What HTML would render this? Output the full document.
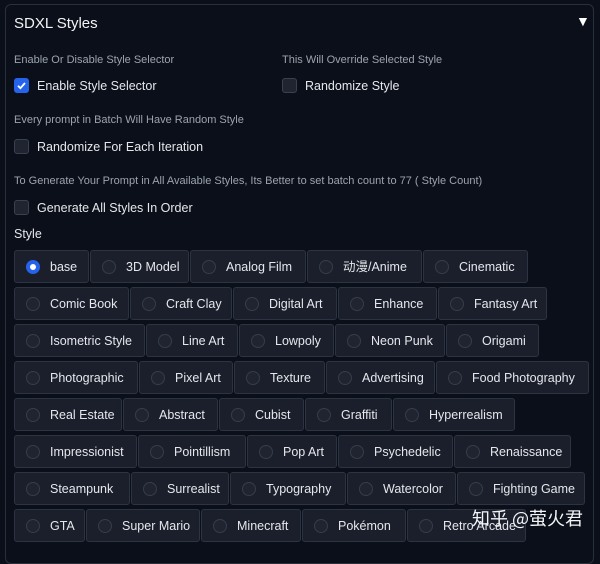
<!DOCTYPE html><html><head><meta charset="utf-8"><style>
*{margin:0;padding:0;box-sizing:border-box}
body{width:600px;height:544px;background:#0b0f19;font-family:"Liberation Sans","Noto Sans CJK SC",sans-serif;color:#e5e7eb;position:relative;overflow:hidden}
.panel{position:absolute;left:5px;top:4px;width:589px;height:560px;border:1px solid #2a303b;border-radius:6px;background:#0b0f19}
.t{position:absolute;white-space:nowrap}
.lab{font-size:11px;color:#9ca3af}
.cb{position:absolute;width:15px;height:15px;border-radius:3px;background:#1f2430;border:1px solid #374151}
.c{position:absolute;height:33px;background:#1a1f2b;border:1px solid #2c3442;border-radius:3px;font-size:12.5px;color:#e5e7eb;line-height:32px;white-space:nowrap}
.c i{position:absolute;left:11px;top:9px;width:14px;height:14px;border-radius:50%;background:#1f2430;border:1px solid #353d4a}
.c span{position:absolute;left:35px}
</style></head><body>
<div class="panel"></div>
<div class="t" style="left:14px;top:15px;font-size:15px;color:#f3f4f6">SDXL Styles</div>
<div class="t" style="left:576px;top:13px;font-size:14px;color:#fff">▼</div>
<div class="t lab" style="left:14px;top:54px">Enable Or Disable Style Selector</div>
<div class="t lab" style="left:282px;top:54px">This Will Override Selected Style</div>
<div class="cb" style="left:14px;top:78px;background:#2563eb;border-color:#2563eb"><svg width="13" height="13" viewBox="0 0 13 13" style="position:absolute;left:0;top:0"><path d="M3 6.8L5.4 9.2L10 4" stroke="#fff" stroke-width="1.8" fill="none"/></svg></div>
<div class="t" style="left:37px;top:79px;font-size:12.5px">Enable Style Selector</div>
<div class="cb" style="left:282px;top:78px"></div>
<div class="t" style="left:305px;top:79px;font-size:12.5px">Randomize Style</div>
<div class="t lab" style="left:14px;top:114px">Every prompt in Batch Will Have Random Style</div>
<div class="cb" style="left:14px;top:139px"></div>
<div class="t" style="left:37px;top:140px;font-size:12.5px">Randomize For Each Iteration</div>
<div class="t lab" style="left:14px;top:175px">To Generate Your Prompt in All Available Styles, Its Better to set batch count to 77 ( Style Count)</div>
<div class="cb" style="left:14px;top:200px"></div>
<div class="t" style="left:37px;top:201px;font-size:12.5px">Generate All Styles In Order</div>
<div class="t" style="left:14px;top:227px;font-size:12.5px">Style</div>

<div class="c" style="left:14px;top:250px;width:75px"><i style="background:#fff;border:4px solid #2563eb"></i><span>base</span></div>
<div class="c" style="left:90px;top:250px;width:99px"><i></i><span>3D Model</span></div>
<div class="c" style="left:190px;top:250px;width:116px"><i></i><span>Analog Film</span></div>
<div class="c" style="left:307px;top:250px;width:115px"><i></i><span>动漫/Anime</span></div>
<div class="c" style="left:423px;top:250px;width:105px"><i></i><span>Cinematic</span></div>

<div class="c" style="left:14px;top:287px;width:115px"><i></i><span>Comic Book</span></div>
<div class="c" style="left:130px;top:287px;width:102px"><i></i><span>Craft Clay</span></div>
<div class="c" style="left:233px;top:287px;width:104px"><i></i><span>Digital Art</span></div>
<div class="c" style="left:338px;top:287px;width:99px"><i></i><span>Enhance</span></div>
<div class="c" style="left:438px;top:287px;width:109px"><i></i><span>Fantasy Art</span></div>

<div class="c" style="left:14px;top:324px;width:131px"><i></i><span>Isometric Style</span></div>
<div class="c" style="left:146px;top:324px;width:92px"><i></i><span>Line Art</span></div>
<div class="c" style="left:239px;top:324px;width:95px"><i></i><span>Lowpoly</span></div>
<div class="c" style="left:335px;top:324px;width:110px"><i></i><span>Neon Punk</span></div>
<div class="c" style="left:446px;top:324px;width:93px"><i></i><span>Origami</span></div>

<div class="c" style="left:14px;top:361px;width:124px"><i></i><span>Photographic</span></div>
<div class="c" style="left:139px;top:361px;width:94px"><i></i><span>Pixel Art</span></div>
<div class="c" style="left:234px;top:361px;width:91px"><i></i><span>Texture</span></div>
<div class="c" style="left:326px;top:361px;width:109px"><i></i><span>Advertising</span></div>
<div class="c" style="left:436px;top:361px;width:153px"><i></i><span>Food Photography</span></div>

<div class="c" style="left:14px;top:398px;width:108px"><i></i><span>Real Estate</span></div>
<div class="c" style="left:123px;top:398px;width:95px"><i></i><span>Abstract</span></div>
<div class="c" style="left:219px;top:398px;width:85px"><i></i><span>Cubist</span></div>
<div class="c" style="left:305px;top:398px;width:87px"><i></i><span>Graffiti</span></div>
<div class="c" style="left:393px;top:398px;width:122px"><i></i><span>Hyperrealism</span></div>

<div class="c" style="left:14px;top:435px;width:123px"><i></i><span>Impressionist</span></div>
<div class="c" style="left:138px;top:435px;width:108px"><i></i><span>Pointillism</span></div>
<div class="c" style="left:247px;top:435px;width:90px"><i></i><span>Pop Art</span></div>
<div class="c" style="left:338px;top:435px;width:115px"><i></i><span>Psychedelic</span></div>
<div class="c" style="left:454px;top:435px;width:117px"><i></i><span>Renaissance</span></div>

<div class="c" style="left:14px;top:472px;width:116px"><i></i><span>Steampunk</span></div>
<div class="c" style="left:131px;top:472px;width:98px"><i></i><span>Surrealist</span></div>
<div class="c" style="left:230px;top:472px;width:116px"><i></i><span>Typography</span></div>
<div class="c" style="left:347px;top:472px;width:109px"><i></i><span>Watercolor</span></div>
<div class="c" style="left:457px;top:472px;width:128px"><i></i><span>Fighting Game</span></div>

<div class="c" style="left:14px;top:509px;width:71px"><i></i><span>GTA</span></div>
<div class="c" style="left:86px;top:509px;width:114px"><i></i><span>Super Mario</span></div>
<div class="c" style="left:201px;top:509px;width:100px"><i></i><span>Minecraft</span></div>
<div class="c" style="left:302px;top:509px;width:104px"><i></i><span>Pokémon</span></div>
<div class="c" style="left:407px;top:509px;width:119px"><i></i><span>Retro Arcade</span></div>
<div class="t" style="left:472px;top:505px;font-size:18px;color:#f3f4f6;font-family:'Noto Sans CJK SC',sans-serif">知乎 @萤火君</div>
</body></html>
